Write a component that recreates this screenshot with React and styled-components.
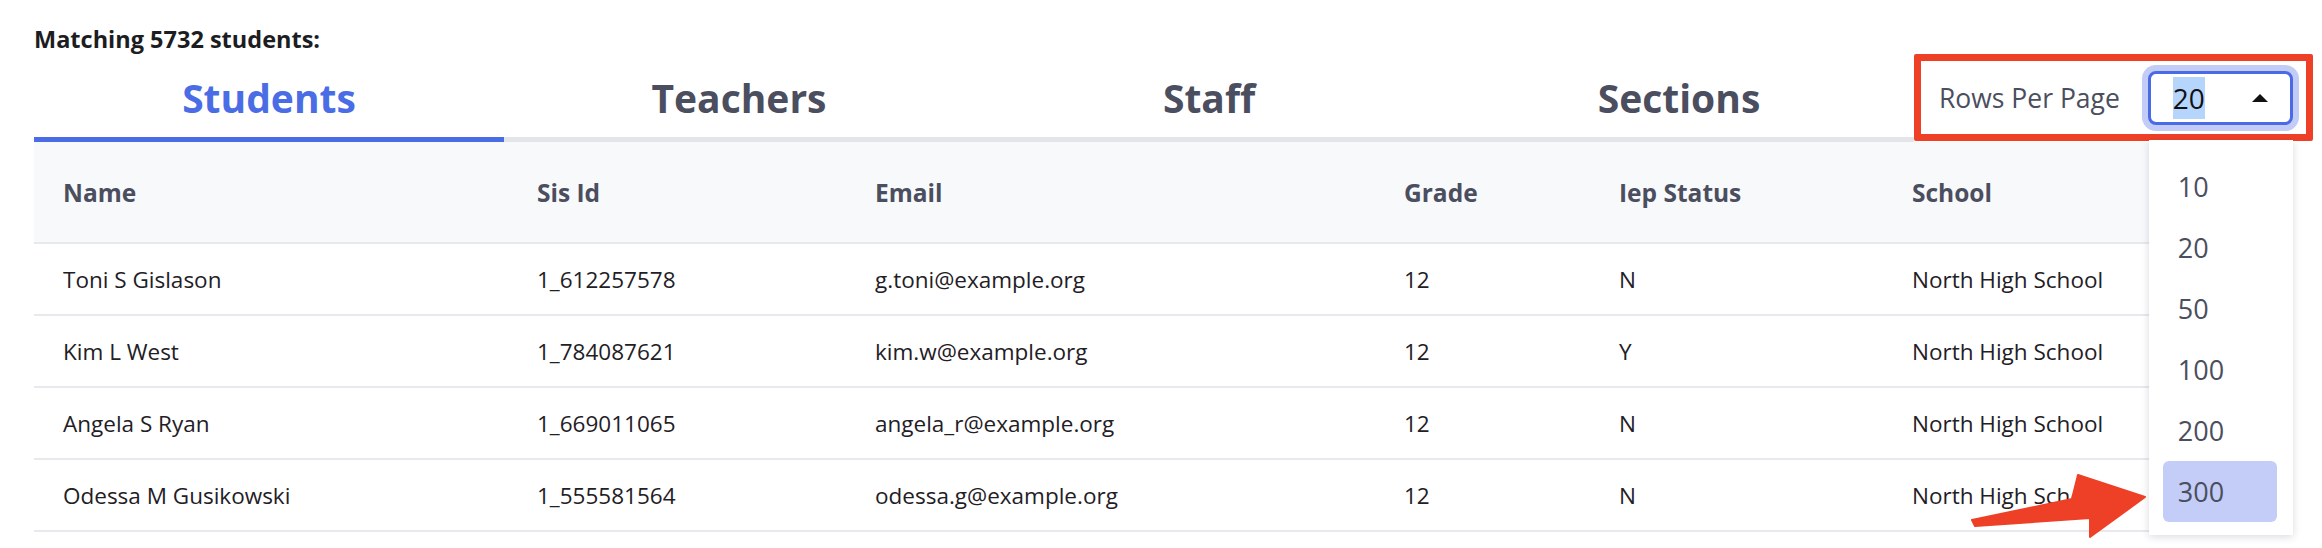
import React from 'react';
import styled, { createGlobalStyle } from 'styled-components';

const GlobalStyle = createGlobalStyle`
  body {
    margin: 0;
    background: #ffffff;
    font-family: "Open Sans", Lato, sans-serif;
  }
`;

const Page = styled.div`
  position: relative;
  width: 2322px;
  height: 548px;
  padding-left: 34px;
  box-sizing: border-box;
  overflow: hidden;
`;

const Title = styled.div`
  padding-top: 24px;
  font-size: 23.5px;
  line-height: 30px;
  font-weight: 700;
  color: #1c1d22;
`;

const TopBar = styled.div`
  display: flex;
  align-items: flex-end;
  height: 88px;
`;

const Tabs = styled.div`
  display: flex;
  flex-shrink: 0;
  width: 1880px;
`;

const Tab = styled.div`
  flex: 1;
  text-align: center;
  font-size: 39px;
  line-height: 50px;
  font-weight: 700;
  padding-bottom: 14px;
  color: ${p => (p.$active ? '#4a6de5' : '#4b4e5e')};
  border-bottom: 5px solid ${p => (p.$active ? '#4a6de5' : '#e4e5ea')};
`;

const RowsBox = styled.div`
  align-self: flex-start;
  flex-shrink: 0;
  display: flex;
  align-items: center;
  height: 87px;
  width: 399px;
  box-sizing: border-box;
  border: 7px solid #ee4027;
  border-radius: 2px;
  padding-left: 18px;
`;

const RowsLabel = styled.span`
  font-size: 26.5px;
  color: #4b4e5e;
  margin-right: 28px;
  white-space: nowrap;
`;

const Select = styled.div`
  position: relative;
  flex-shrink: 0;
  display: flex;
  align-items: center;
  justify-content: space-between;
  width: 145px;
  height: 54px;
  box-sizing: border-box;
  border: 3px solid #4a6ae6;
  border-radius: 8px;
  box-shadow: 0 0 0 6px #c3ccf7;
  padding: 0 22px 0 22px;
  background: #fff;
`;

const SelectValue = styled.span`
  font-size: 28px;
  line-height: 42px;
  color: #111;
  background: #b5d5fd;
`;

const Caret = styled.span`
  width: 0;
  height: 0;
  border-left: 8px solid transparent;
  border-right: 8px solid transparent;
  border-bottom: 8px solid #111;
`;

const Menu = styled.ul`
  position: absolute;
  top: 66px;
  left: -2px;
  width: 144px;
  margin: 0;
  padding: 16px 16px 13px 14px;
  box-sizing: border-box;
  list-style: none;
  background: #fff;
  box-shadow: 0 2px 8px rgba(30, 34, 60, 0.16);
  z-index: 5;
`;

const MenuItem = styled.li`
  height: 61px;
  display: flex;
  align-items: center;
  padding-left: 15px;
  font-size: 27px;
  color: #4b4e5e;
  border-radius: 6px;
  background: ${p => (p.$selected ? '#c4cdf8' : 'transparent')};
`;

const Table = styled.div`
  display: grid;
  width: 2254px;
  grid-template-columns: 474px 338px 529px 215px 293px 1fr;
`;

const HeadCell = styled.div`
  height: 100px;
  display: flex;
  align-items: center;
  padding-left: 29px;
  background: #f8f9fb;
  border-bottom: 2px solid #e8e9ed;
  font-size: 24.5px;
  font-weight: 700;
  color: #4b4e5e;
`;

const Cell = styled.div`
  height: 70px;
  display: flex;
  align-items: center;
  padding-left: 29px;
  border-bottom: 2px solid #e8e9ed;
  font-size: 22.5px;
  color: #1f2026;
  white-space: nowrap;
`;

const Arrow = styled.svg`
  position: absolute;
  left: 0;
  top: 0;
  pointer-events: none;
  z-index: 10;
`;

const columns = ['Name', 'Sis Id', 'Email', 'Grade', 'Iep Status', 'School'];

const students = [
  ['Toni S Gislason', '1_612257578', 'g.toni@example.org', '12', 'N', 'North High School'],
  ['Kim L West', '1_784087621', 'kim.w@example.org', '12', 'Y', 'North High School'],
  ['Angela S Ryan', '1_669011065', 'angela_r@example.org', '12', 'N', 'North High School'],
  ['Odessa M Gusikowski', '1_555581564', 'odessa.g@example.org', '12', 'N', 'North High School'],
];

const options = [10, 20, 50, 100, 200, 300];

export default function App() {
  return (
    <>
      <GlobalStyle />
      <Page>
        <Title>Matching 5732 students:</Title>
        <TopBar>
          <Tabs>
            <Tab $active>Students</Tab>
            <Tab>Teachers</Tab>
            <Tab>Staff</Tab>
            <Tab>Sections</Tab>
          </Tabs>
          <RowsBox>
            <RowsLabel>Rows Per Page</RowsLabel>
            <Select>
              <SelectValue>20</SelectValue>
              <Caret />
              <Menu>
                {options.map(o => (
                  <MenuItem key={o} $selected={o === 300}>{o}</MenuItem>
                ))}
              </Menu>
            </Select>
          </RowsBox>
        </TopBar>
        <Table>
          {columns.map(c => <HeadCell key={c}>{c}</HeadCell>)}
          {students.map(row =>
            row.map((v, i) => <Cell key={row[0] + i}>{v}</Cell>)
          )}
        </Table>
        <Arrow width="2322" height="548" viewBox="0 0 2322 548">
          <polygon
            points="1972,520 2072,499 2078,475 2145,497 2090,537 2090,518 1975,526"
            fill="#ee4027"
            stroke="#ee4027"
            strokeWidth="2"
            strokeLinejoin="round"
          />
        </Arrow>
      </Page>
    </>
  );
}
